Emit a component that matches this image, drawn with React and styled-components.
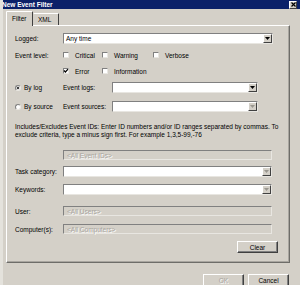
import React from 'react';
import styled, { createGlobalStyle } from 'styled-components';

const Global = createGlobalStyle`
  html, body {
    margin: 0;
    padding: 0;
    background: #d4d0c8;
  }
  * {
    box-sizing: border-box;
  }
`;

const Arrow = ({ disabled }) => (
  <svg width="5" height="3" viewBox="0 0 5 3">
    <path d="M0 0 H5 L2.5 3 Z" fill={disabled ? '#9a978f' : '#000'} />
  </svg>
);

const Combo = ({ width, value, disabled }) => (
  <ComboBox $w={width}>
    <ComboText>{value}</ComboText>
    <ArrowButton>
      <Arrow disabled={disabled} />
    </ArrowButton>
  </ComboBox>
);

const Check = ({ checked, children }) => (
  <CheckItem>
    <CheckBox>
      {checked && (
        <svg width="6" height="6" viewBox="0 0 6 6">
          <path d="M1 2.5 L2.4 4 L5 1.2" stroke="#000" strokeWidth="1.2" fill="none" />
        </svg>
      )}
    </CheckBox>
    {children}
  </CheckItem>
);

const App = () => {
  return (
    <>
      <Global />
      <Window>
        <TitleBar>
          <Title>New Event Filter</Title>
          <CloseButton>
            <svg width="5" height="5" viewBox="0 0 5 5">
              <path d="M0.5 0.5 L4.5 4.5 M4.5 0.5 L0.5 4.5" stroke="#000" strokeWidth="1.2" />
            </svg>
          </CloseButton>
        </TitleBar>

        <Body>
          <Tabs>
            <Tab $active>Filter</Tab>
            <Tab>XML</Tab>
          </Tabs>

          <Panel>
            <Row $top={7}>
              <Label>Logged:</Label>
              <Combo width={210} value="Any time" />
            </Row>

            <Row $top={6} $h={10}>
              <Label>Event level:</Label>
              <CheckGrid>
                <Check>Critical</Check>
                <Check>Warning</Check>
                <Check>Verbose</Check>
              </CheckGrid>
            </Row>
            <Row $top={6} $h={10}>
              <Label />
              <CheckGrid>
                <Check checked>Error</Check>
                <Check>Information</Check>
              </CheckGrid>
            </Row>

            {/* Log or source */}
            <Row $top={6}>
              <RadioItem>
                <Radio $on />
                By log
              </RadioItem>
              <SubLabel>Event logs:</SubLabel>
              <Combo width={146} value="" />
            </Row>
            <Row $top={8}>
              <RadioItem>
                <Radio />
                By source
              </RadioItem>
              <SubLabel>Event sources:</SubLabel>
              <Combo width={146} value="" disabled />
            </Row>

            <Hint>
              <span>Includes/Excludes Event IDs: Enter ID numbers and/or ID ranges separated by commas. To</span>
              <span>exclude criteria, type a minus sign first. For example 1,3,5-99,-76</span>
            </Hint>

            <Row $top={11} $h={10}>
              <Label />
              <TextBox>&lt;All Event IDs&gt;</TextBox>
            </Row>

            <Row $top={6}>
              <Label>Task category:</Label>
              <Combo width={209} value="" disabled />
            </Row>
            <Row $top={7}>
              <Label>Keywords:</Label>
              <Combo width={209} value="" disabled />
            </Row>

            <Row $top={11} $h={10}>
              <Label>User:</Label>
              <TextBox>&lt;All Users&gt;</TextBox>
            </Row>
            <Row $top={8} $h={10}>
              <Label>Computer(s):</Label>
              <TextBox>&lt;All Computers&gt;</TextBox>
            </Row>

            <ClearRow>
              <Button>Clear</Button>
            </ClearRow>
          </Panel>

          <Footer>
            <Button disabled>OK</Button>
            <Button>Cancel</Button>
          </Footer>
        </Body>
      </Window>
    </>
  );
};

const Window = styled.div`
  width: 300px;
  height: 285px;
  overflow: hidden;
  background: #d4d0c8;
  border-left: 3px solid #e4e2dc;
  font-family: 'Liberation Sans', Arial, sans-serif;
  font-size: 6.5px;
  color: #000;
`;

const TitleBar = styled.div`
  height: 9px;
  margin-left: -3px;
  display: flex;
  align-items: center;
  justify-content: space-between;
  padding: 0 3px 0 2px;
  background: #0b2169;
`;

const Title = styled.span`
  color: #fff;
  font-weight: bold;
  font-size: 6.5px;
`;

const CloseButton = styled.div`
  width: 8px;
  height: 8px;
  display: flex;
  align-items: center;
  justify-content: center;
  background: #d4d0c8;
  border: 1px solid;
  border-color: #fff #404040 #404040 #fff;
`;

const Body = styled.div`
  padding: 2px 0 0 3px;
  border-left: 1px solid #c6c3bc;
  margin-left: -1px;
`;

const Tabs = styled.div`
  display: flex;
  align-items: flex-end;
  height: 14px;
`;

const Tab = styled.div`
  position: relative;
  z-index: ${p => (p.$active ? 2 : 0)};
  height: ${p => (p.$active ? 15 : 12)}px;
  width: ${p => (p.$active ? 27 : 26)}px;
  margin-bottom: ${p => (p.$active ? -1 : 0)}px;
  padding: ${p => (p.$active ? '3px 0 0 5px' : '2px 0 0 4px')};
  background: #d4d0c8;
  border: 1px solid;
  border-bottom: none;
  border-color: #fff #404040 transparent ${p => (p.$active ? '#fff' : 'transparent')};
  border-radius: 1px 1px 0 0;
`;

const Panel = styled.div`
  width: 284px;
  height: 238px;
  padding: 0 11px 0 8px;
  border: 1px solid;
  border-color: #fff #6e6d69 #6e6d69 #fff;
  box-shadow: inset -1px -1px 0 #a9a6a0;
  display: flex;
  flex-direction: column;
`;

const Row = styled.div`
  display: flex;
  align-items: center;
  height: ${p => p.$h || 11}px;
  margin-top: ${p => p.$top}px;
  flex: none;
`;

const Label = styled.span`
  width: 48px;
  flex: none;
  white-space: nowrap;
`;

const SubLabel = styled.span`
  width: 49px;
  flex: none;
  white-space: nowrap;
`;

const ComboBox = styled.div`
  width: ${p => p.$w}px;
  height: 100%;
  display: flex;
  align-items: center;
  background: #fff;
  border: 1px solid;
  border-color: #808080 #e8e6e1 #e8e6e1 #808080;
  padding: 0 0 0 2px;
`;

const ComboText = styled.span`
  flex: 1;
  white-space: nowrap;
`;

const ArrowButton = styled.div`
  width: 9px;
  height: 100%;
  display: flex;
  align-items: center;
  justify-content: center;
  background: #d4d0c8;
  border: 1px solid;
  border-color: #fff #404040 #404040 #fff;
`;

const CheckGrid = styled.div`
  display: grid;
  grid-template-columns: 39px 51px auto;
  align-items: center;
`;

const CheckItem = styled.label`
  display: flex;
  align-items: center;
  gap: 6px;
  white-space: nowrap;
`;

const CheckBox = styled.span`
  width: 6px;
  height: 6px;
  display: flex;
  align-items: center;
  justify-content: center;
  background: #fff;
  border: 1px solid;
  border-color: #808080 #e8e6e1 #e8e6e1 #808080;

  svg {
    flex: none;
  }
`;

const RadioItem = styled.label`
  width: 48px;
  flex: none;
  display: flex;
  align-items: center;
  gap: 3px;
  white-space: nowrap;
`;

const Radio = styled.span`
  width: 6px;
  height: 6px;
  border-radius: 50%;
  background: #fff;
  border: 1px solid #808080;
  border-right-color: #e8e6e1;
  border-bottom-color: #e8e6e1;
  box-shadow: ${p => (p.$on ? 'inset 0 0 0 1px #fff, inset 0 0 0 2px #000' : 'none')};
`;

const Hint = styled.div`
  margin-top: 11px;
  display: flex;
  flex-direction: column;
  line-height: 8px;
  white-space: nowrap;
`;

const TextBox = styled.div`
  width: 209px;
  height: 100%;
  display: flex;
  align-items: center;
  padding-left: 3px;
  background: #d4d0c8;
  border: 1px solid;
  border-color: #808080 #e8e6e1 #e8e6e1 #808080;
  color: #a8a59e;
  text-shadow: 1px 1px 0 #fff;
`;

const ClearRow = styled.div`
  margin-top: 7px;
  display: flex;
  justify-content: flex-end;
`;

const Button = styled.button`
  width: 41px;
  height: 12px;
  padding: 0;
  font-family: inherit;
  font-size: 6.5px;
  background: #d4d0c8;
  color: ${p => (p.disabled ? '#a8a59e' : '#000')};
  text-shadow: ${p => (p.disabled ? '1px 1px 0 #fff' : 'none')};
  border: 1px solid;
  border-color: #fff #404040 #404040 #fff;
  box-shadow: inset -1px -1px 0 #808080;
`;

const Footer = styled.div`
  margin-top: 11px;
  padding-right: 11px;
  display: flex;
  justify-content: flex-end;
  gap: 4px;

  button {
    height: 13px;
  }
`;

export default App;
